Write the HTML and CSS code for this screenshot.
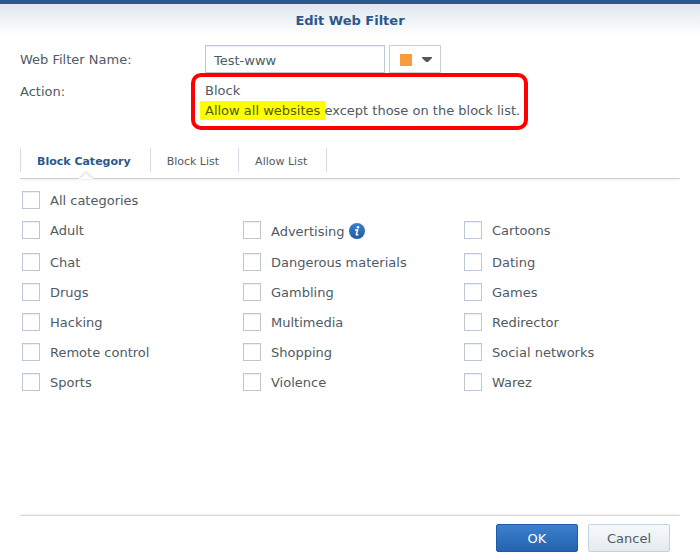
FILE: index.html
```
<!DOCTYPE html>
<html lang="en">
<head>
    <meta charset="UTF-8">
    <meta name="viewport" content="width=device-width, initial-scale=1.0">
    <title>Edit Web Filter</title>
    <link rel="stylesheet" href="styles.css">
</head>
<body>
    <form class="dialog">
        <header class="dialog-header">
            <h1>Edit Web Filter</h1>
        </header>

        <div class="settings">
            <label class="field-label" for="filterName">Web Filter Name:</label>
            <div class="name-field">
                <input type="text" id="filterName" name="filterName" class="text-input" value="Test-www">
                <select class="color-select" name="color" aria-label="Color">
                    <option value="orange"></option>
                </select>
            </div>

            <span class="field-label">Action:</span>
            <div class="action-text">
                <p>Block</p>
                <p><mark>Allow all websites</mark> except those on the block list.</p>
            </div>
        </div>

        <nav class="tabs">
            <button type="button" class="tab active">Block Category</button>
            <button type="button" class="tab">Block List</button>
            <button type="button" class="tab">Allow List</button>
            <!-- Arrow under the active tab -->
            <svg class="tab-arrow" width="14" height="8" viewBox="0 0 14 8">
                <path d="M0 8V7L7 0L14 7V8Z" fill="#fff"/>
                <path d="M0.5 7L7 0.5L13.5 7" fill="none" stroke="#d0d0d0"/>
                <path d="M2.5 7L7 2.5L11.5 7" fill="none" stroke="#f0f0f0"/>
            </svg>
        </nav>

        <div class="categories">
            <label class="check all"><input type="checkbox" name="all"> All categories</label>

            <label class="check"><input type="checkbox" name="adult"> Adult</label>
            <div class="with-info">
                <label class="check"><input type="checkbox" name="advertising"> Advertising</label>
                <svg class="info" width="16" height="16" viewBox="0 0 16 16">
                    <defs>
                        <linearGradient id="infoFill" x1="0" y1="0" x2="0" y2="1">
                            <stop offset="0" stop-color="#3d80cd"/>
                            <stop offset="1" stop-color="#1d5ba8"/>
                        </linearGradient>
                    </defs>
                    <circle cx="8" cy="8" r="8" fill="url(#infoFill)"/>
                    <circle cx="9" cy="4.2" r="1.3" fill="#fff"/>
                    <path d="M6 6.9H8.6L7.3 11.4Q7.2 12.4 9.4 11.4" fill="none" stroke="#fff" stroke-width="1.5"/>
                </svg>
            </div>
            <label class="check"><input type="checkbox" name="cartoons"> Cartoons</label>

            <label class="check"><input type="checkbox" name="chat"> Chat</label>
            <label class="check"><input type="checkbox" name="dangerous"> Dangerous materials</label>
            <label class="check"><input type="checkbox" name="dating"> Dating</label>

            <label class="check"><input type="checkbox" name="drugs"> Drugs</label>
            <label class="check"><input type="checkbox" name="gambling"> Gambling</label>
            <label class="check"><input type="checkbox" name="games"> Games</label>

            <label class="check"><input type="checkbox" name="hacking"> Hacking</label>
            <label class="check"><input type="checkbox" name="multimedia"> Multimedia</label>
            <label class="check"><input type="checkbox" name="redirector"> Redirector</label>

            <label class="check"><input type="checkbox" name="remote"> Remote control</label>
            <label class="check"><input type="checkbox" name="shopping"> Shopping</label>
            <label class="check"><input type="checkbox" name="social"> Social networks</label>

            <label class="check"><input type="checkbox" name="sports"> Sports</label>
            <label class="check"><input type="checkbox" name="violence"> Violence</label>
            <label class="check"><input type="checkbox" name="warez"> Warez</label>
        </div>

        <footer class="dialog-footer">
            <button type="button" class="btn btn-primary">OK</button>
            <button type="button" class="btn">Cancel</button>
        </footer>
    </form>
</body>
</html>
```
FILE: styles.css
```
* {
    box-sizing: border-box;
}
body {
    margin: 0;
    background: #fff;
    color: #505a64;
    font-family: Verdana, "DejaVu Sans", sans-serif;
    font-size: 13px;
    line-height: 20px;
}
input, select, button {
    font: inherit;
    color: inherit;
}
h1, p {
    margin: 0;
}
.dialog {
    display: flex;
    flex-direction: column;
    min-height: 100vh;
    border-top: 4px solid #2a588c;
}
.dialog-header {
    padding: 7px 0 5px;
    background: linear-gradient(#dfe6ee, #fff);
    text-align: center;
}
h1 {
    color: #2a588c;
    font-size: 13px;
    line-height: 20px;
}

/* Name and action */
.settings {
    display: grid;
    grid-template-columns: 185px 1fr;
    row-gap: 8px;
    padding: 9px 20px 0;
}
.name-field {
    display: flex;
    gap: 4px;
}
.field-label {
    padding-top: 1px;
}
.field-label:first-child {
    padding-top: 5px;
}
.text-input {
    width: 180px;
    height: 28px;
    padding: 2px 8px 0;
    border: 1px solid #bec8d4;
    border-radius: 0;
    box-shadow: inset 0 1px 1px #eceff3;
}
.color-select {
    appearance: none;
    width: 52px;
    height: 28px;
    border: 1px solid #c6d0da;
    border-radius: 0;
    background:
        linear-gradient(#fa9b3c, #fa9b3c) 10px 8px / 12px 12px no-repeat,
        url("data:image/svg+xml,%3Csvg xmlns='http://www.w3.org/2000/svg' width='10' height='5'%3E%3Cpath d='M0 0H10V1L6 5H4L0 1Z' fill='%23505a64'/%3E%3C/svg%3E") 32px 11px no-repeat,
        #fff;
}
.action-text {
    position: relative;
    justify-self: start;
}
.action-text::before {
    content: "";
    position: absolute;
    inset: -8px -8px -9px -14px;
    border: 4px solid #f00;
    border-radius: 10px;
}
mark {
    margin: 0 -5px;
    padding: 2px 5px;
    background: #ff0;
    color: #505a14;
}

/* Tabs */
.tabs {
    position: relative;
    display: flex;
    margin: 27px 20px 0;
    padding-bottom: 6px;
    border-bottom: 1px solid #d0d0d0;
    box-shadow: 0 2px 2px -1px #eee;
}
.tab {
    height: 24px;
    padding: 3px 19px 0 16px;
    border: 0;
    border-left: 1px solid #d3deea;
    background: none;
    font-size: 11px;
    line-height: 20px;
}
.tab:last-of-type {
    border-right: 1px solid #d3deea;
}
.tab.active {
    color: #2a588c;
    font-weight: bold;
}
.tab-arrow {
    position: absolute;
    left: 59px;
    bottom: -1px;
}

/* Categories */
.categories {
    display: grid;
    grid-template-columns: repeat(3, 1fr);
    row-gap: 10px;
    padding: 12px 15px 20px 22px;
}
.check {
    display: flex;
    align-items: center;
    align-self: start;
    gap: 10px;
}
.check.all {
    grid-column: 1 / -1;
}
.check input {
    appearance: none;
    width: 18px;
    height: 18px;
    margin: 0 0 2px;
    border: 1px solid #bec8d4;
    background: #fff;
    box-shadow: inset 0 1px 1px #eceff3;
}
.check input:checked {
    background: #2a6ebb;
}
.with-info {
    display: flex;
    gap: 4px;
}
.with-info .check {
    align-items: flex-start;
    line-height: 22px;
}
.info {
    margin-top: 2px;
}

/* Footer */
.dialog-footer {
    display: flex;
    justify-content: flex-end;
    gap: 10px;
    margin: auto 20px 0;
    padding: 8px 10px;
    border-top: 1px solid #d8d8d8;
    box-shadow: 0 -2px 2px -1px #eee;
}
.btn {
    width: 82px;
    height: 28px;
    padding: 1px 0 0;
    border: 1px solid #c6d0da;
    border-radius: 2px;
    background: linear-gradient(#f6fafd, #e6eaef);
}
.btn-primary {
    border-color: #1d5ba8;
    background: linear-gradient(#3d80cd, #2463ae);
    color: #fff;
}
```
